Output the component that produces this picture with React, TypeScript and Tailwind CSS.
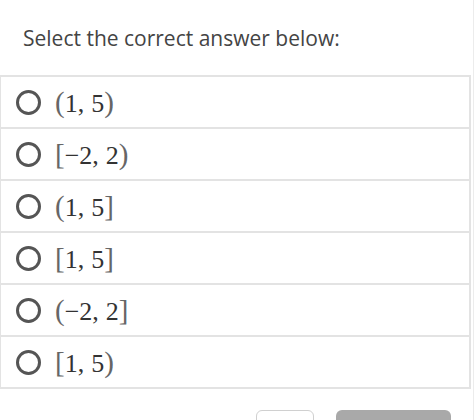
const options = [
  { id: 1, open: '(', a: '1', b: '5', close: ')' },
  { id: 2, open: '[', a: '−2', b: '2', close: ')' },
  { id: 3, open: '(', a: '1', b: '5', close: ']' },
  { id: 4, open: '[', a: '1', b: '5', close: ']' },
  { id: 5, open: '(', a: '−2', b: '2', close: ']' },
  { id: 6, open: '[', a: '1', b: '5', close: ')' },
];

function Radio() {
  return <span className="block w-[25px] h-[25px] rounded-full border-[3px] border-[#555555] shrink-0" />;
}

function Interval({ open, a, b, close }: { open: string; a: string; b: string; close: string }) {
  return (
    <span className="font-['Liberation_Serif',serif] text-[26px] text-[#333333] leading-none flex items-baseline">
      <span className="text-[29px] text-[#666666]">{open}</span>
      <span>{a}</span>
      <span className="mr-[7px]">,</span>
      <span>{b}</span>
      <span className="text-[29px] text-[#666666]">{close}</span>
    </span>
  );
}

export default function App() {
  return (
    <div className="w-[474px] h-[420px] bg-white overflow-hidden font-['Open_Sans',sans-serif] border-r border-[#ececec]">
      <div className="h-[75px] pl-[23px] pt-[24px]">
        <h1 className="text-[21px] text-[#444444] leading-[28px]">Select the correct answer below:</h1>
      </div>

      <div className="w-[471px] border-t-2 border-r-2 border-l border-[#e3e3e3]">
        {options.map((opt) => (
          <div key={opt.id} className="h-[52px] border-b-2 border-[#e3e3e3] flex items-center pl-[15px] gap-[14px]">
            <Radio />
            <Interval open={opt.open} a={opt.a} b={opt.b} close={opt.close} />
          </div>
        ))}
      </div>

      <div className="flex pl-[256px] pt-[21px] gap-[22px]">
        <button className="w-[58px] h-[30px] rounded-[6px] border border-[#d0d0d0] bg-white" />
        <button className="w-[115px] h-[30px] rounded-[6px] bg-[#a9a9a9]" />
      </div>
    </div>
  );
}
